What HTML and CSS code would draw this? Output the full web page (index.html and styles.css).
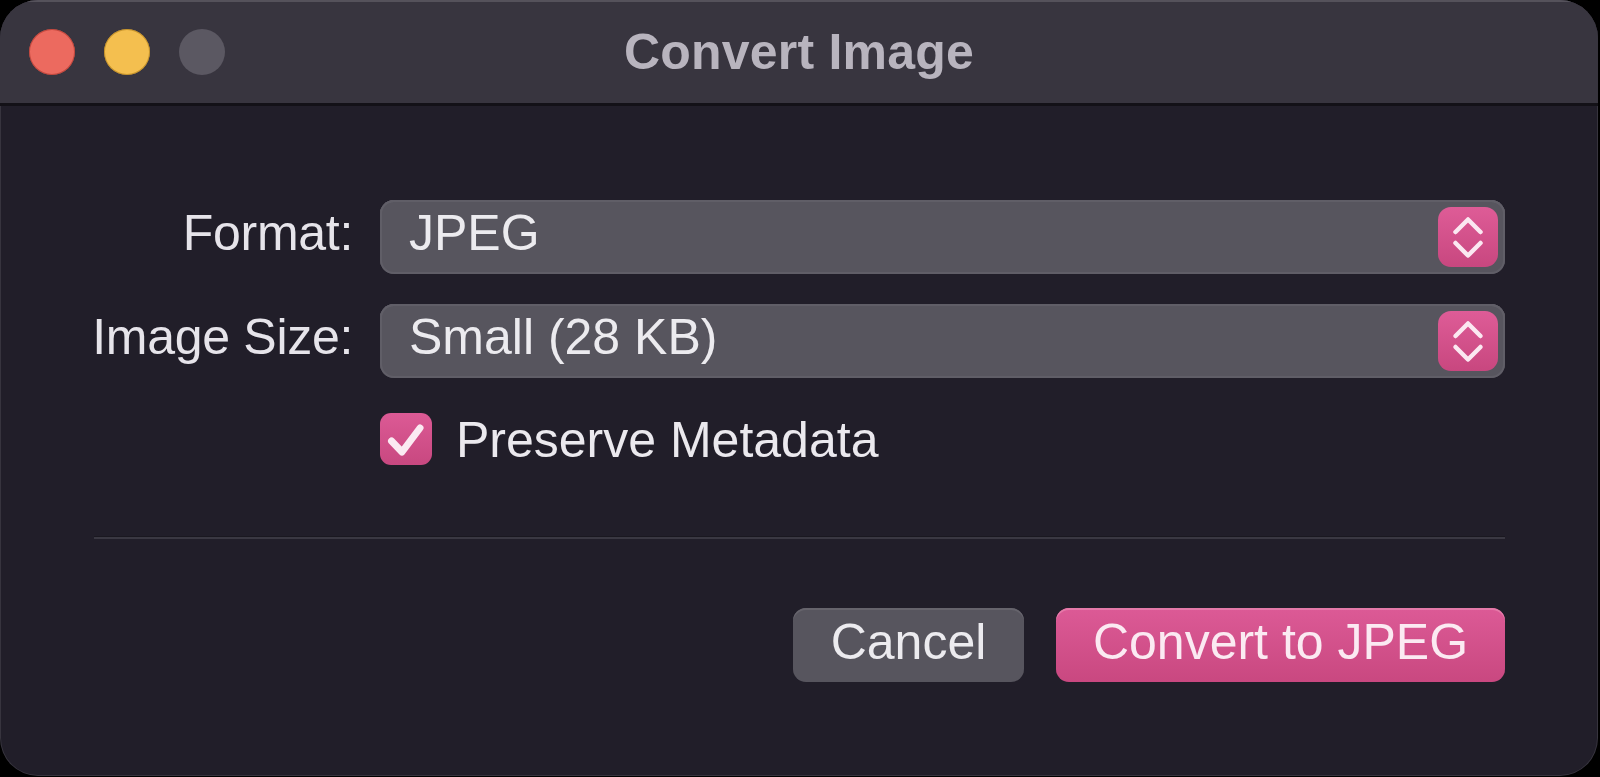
FILE: index.html
```html
<!DOCTYPE html>
<html lang="en">
<head>
<meta charset="utf-8">
<title>Convert Image</title>
<link rel="stylesheet" href="styles.css">
</head>
<body>
<div class="window">
  <header class="titlebar">
    <div class="lights">
      <span class="light red"></span>
      <span class="light yellow"></span>
      <span class="light gray"></span>
    </div>
    <h1 class="title">Convert Image</h1>
    <div class="spacer"></div>
  </header>
  <main class="content">
    <div class="form">
      <label class="label">Format:</label>
      <div class="popup">
        <span class="value">JPEG</span>
        <span class="stepper">
          <svg viewBox="0 0 60 60" width="60" height="60"><path d="M17.5 25 L30 12.5 L42.5 25 M17.5 36 L30 48.5 L42.5 36" fill="none" stroke="#fbe8f1" stroke-width="4.5" stroke-linecap="round" stroke-linejoin="round"/></svg>
        </span>
      </div>
      <label class="label">Image Size:</label>
      <div class="popup">
        <span class="value">Small (28 KB)</span>
        <span class="stepper">
          <svg viewBox="0 0 60 60" width="60" height="60"><path d="M17.5 25 L30 12.5 L42.5 25 M17.5 36 L30 48.5 L42.5 36" fill="none" stroke="#fbe8f1" stroke-width="4.5" stroke-linecap="round" stroke-linejoin="round"/></svg>
        </span>
      </div>
      <div class="empty"></div>
      <div class="check-row">
        <span class="checkbox">
          <svg viewBox="0 0 52 52" width="52" height="52"><path d="M11.5 28 L22 39 L40 15" fill="none" stroke="#fbeaf2" stroke-width="7" stroke-linecap="round" stroke-linejoin="round"/></svg>
        </span>
        <span class="check-label">Preserve Metadata</span>
      </div>
    </div>
    <div class="divider"></div>
    <div class="actions">
      <button class="btn cancel">Cancel</button>
      <button class="btn primary">Convert to JPEG</button>
    </div>
  </main>
</div>
</body>
</html>
```
FILE: styles.css
```css
html, body {
  margin: 0;
  padding: 0;
  background: #000;
}
body {
  width: 1600px;
  height: 777px;
  overflow: hidden;
  font-family: "Liberation Sans", Arial, sans-serif;
}
.window {
  width: 1598px;
  height: 776px;
  border-radius: 38px;
  overflow: hidden;
  background: #211e29;
  display: flex;
  flex-direction: column;
  box-shadow: inset 0 0 0 1px rgba(255,255,255,0.10);
}
.titlebar {
  flex: none;
  background: #38353f;
  border-top: 2px solid #55525b;
  border-bottom: 3px solid #131117;
  box-sizing: border-box;
  height: 106px;
  display: grid;
  grid-template-columns: 1fr auto 1fr;
  align-items: center;
}
.lights {
  display: flex;
  gap: 29px;
  padding-left: 29px;
  margin-top: -2px;
}
.light {
  width: 46px;
  height: 46px;
  border-radius: 50%;
  display: block;
}
.red { background: #ec6a5f; box-shadow: inset 0 0 0 1px rgba(170,50,40,0.6); }
.yellow { background: #f4bf4f; box-shadow: inset 0 0 0 1px rgba(170,120,20,0.6); }
.gray { background: #5b5862; }
.title {
  margin: 0;
  font-size: 50px;
  font-weight: 700;
  color: #b8b4be;
  line-height: 1;
  margin-top: -2px;
  letter-spacing: 0.2px;
}
.content {
  padding: 94px 93px 0 94px;
  display: flex;
  flex-direction: column;
}
.form {
  display: grid;
  grid-template-columns: 259px 1fr;
  column-gap: 27px;
  row-gap: 30px;
  align-items: center;
}
.label {
  justify-self: end;
  white-space: nowrap;
  font-size: 50px;
  color: #e6e4ea;
  line-height: 1;
  margin-top: -8px;
  letter-spacing: -0.3px;
}
.popup {
  height: 74px;
  box-sizing: border-box;
  border-radius: 14px;
  background: #57555e;
  box-shadow: inset 0 0 0 2px #605e67, inset 0 2px 0 #6a6871;
  display: flex;
  align-items: center;
  justify-content: space-between;
  padding: 0 7px 0 29px;
}
.value {
  font-size: 50px;
  color: #ecebef;
  line-height: 1;
  margin-top: -8px;
}
.stepper {
  width: 60px;
  height: 60px;
  border-radius: 13px;
  background: linear-gradient(#de5c97, #c8477f);
  display: flex;
}
.check-row {
  margin-top: 5px;
  display: flex;
  align-items: center;
  gap: 24px;
}
.checkbox {
  width: 52px;
  height: 52px;
  border-radius: 11px;
  background: linear-gradient(#dc5a95, #c84880);
  display: flex;
}
.check-label {
  font-size: 50px;
  color: #ebe9ee;
  line-height: 1;
  margin-top: 1px;
}
.divider {
  margin-top: 71px;
  height: 3px;
  background: #3a3842;
  border-top: 1px solid #1a1820;
  box-sizing: border-box;
}
.actions {
  margin-top: 69px;
  display: flex;
  justify-content: flex-end;
  gap: 32px;
}
.btn {
  height: 74px;
  border: none;
  border-radius: 13px;
  font-family: "Liberation Sans", Arial, sans-serif;
  font-size: 50px;
  line-height: 1;
  padding: 0 0 6px;
  cursor: default;
}
.cancel {
  width: 231px;
  background: #57555e;
  color: #ecebef;
  box-shadow: inset 0 2px 0 #66646c;
}
.primary {
  width: 449px;
  background: linear-gradient(#dc5a96, #c94880);
  color: #fbeaf2;
  box-shadow: inset 0 2px 0 #e57aa9;
}
```
